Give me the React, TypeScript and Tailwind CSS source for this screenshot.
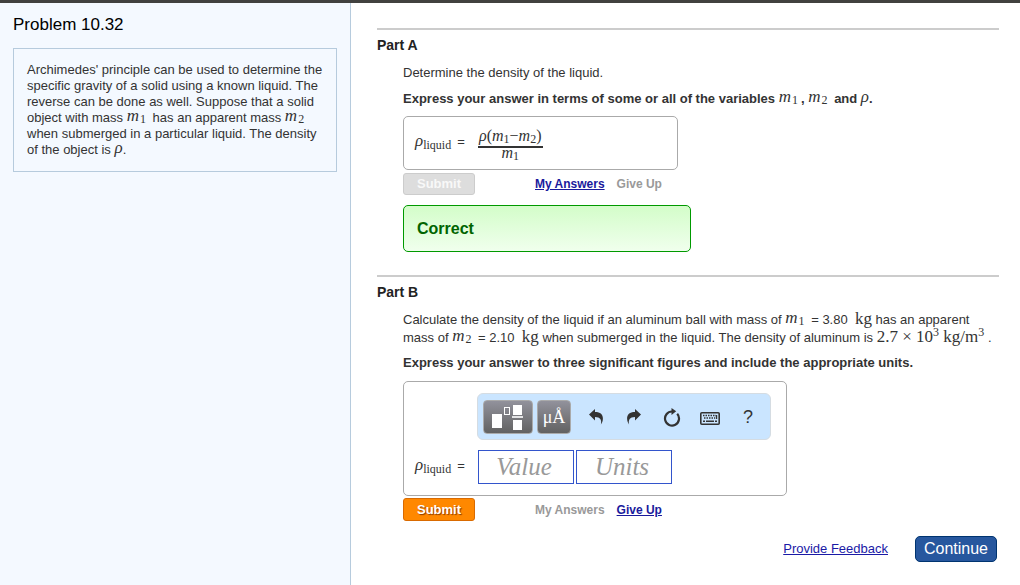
import type { ReactNode } from 'react';

function Sub({ children }: { children: ReactNode }) {
  return <span className="pl-px align-[-2px] text-[12px]">{children}</span>;
}

function MathVar({ name, sub }: { name: string; sub?: string }) {
  return (
    <span
      className={`align-[1px] font-['Liberation_Serif',serif] text-[17px] leading-[0] font-normal ${sub ? 'mr-[3px]' : ''}`}
    >
      <i>{name}</i>
      {sub && <Sub>{sub}</Sub>}
    </span>
  );
}

function Unit({ children }: { children: ReactNode }) {
  return <span className="font-['Liberation_Serif',serif] text-[17px] leading-[0]">{children}</span>;
}

function RhoLiquid() {
  return (
    <span className="w-[63px] shrink-0 pb-1 whitespace-nowrap font-['Liberation_Serif',serif] text-[17px] leading-5">
      <i>ρ</i>
      <span className="align-[-3px] text-[12px] leading-[0]">liquid</span>
      <span className="pl-1.5 font-['Liberation_Sans',sans-serif] text-[13px]">=</span>
    </span>
  );
}

function TemplatesIcon() {
  return (
    <svg width="34" height="26" viewBox="0 0 34 26" aria-hidden="true">
      <rect x="1" y="10" width="10" height="14" fill="#fff" />
      <rect x="13.5" y="3.5" width="5" height="7" fill="none" stroke="#fff" />
      <rect x="22" y="1" width="9" height="10" fill="#fff" />
      <rect x="21" y="12" width="11" height="2" fill="#fff" opacity="0.8" />
      <rect x="22" y="16" width="9" height="10" fill="#fff" />
    </svg>
  );
}

function UndoIcon({ flip = false }: { flip?: boolean }) {
  return (
    <svg width="16" height="18" viewBox="0 0 16 18" fill="#333" aria-hidden="true" className={flip ? '-scale-x-100' : ''}>
      <path d="M1 6.5 7 1v3c5.500 0 8 2.500 7.900 6.800-.1 2.400-.9 4.200-2 5.700 1-4.500-.5-7.500-5.900-7.500v3.500Z" />
    </svg>
  );
}

function ResetIcon() {
  return (
    <svg width="18" height="20" viewBox="0 0 18 20" fill="none" aria-hidden="true">
      <path d="M9 4.500A7 7 0 1 0 14.200 6.800" stroke="#333" strokeWidth="2.200" />
      <path d="M8.500 1 13.200 4.300 8.500 8Z" fill="#333" />
    </svg>
  );
}

function KeyboardIcon() {
  return (
    <svg width="20" height="13" viewBox="0 0 20 13" fill="none" stroke="#333" aria-hidden="true" className="mt-1">
      <rect x="0.8" y="0.8" width="18.4" height="11.4" rx="1" strokeWidth="1.600" />
      <path d="M3 3.500h13M4 6h11" strokeWidth="1.400" strokeDasharray="1.500 1" />
      <path d="M3 9.200h2M6 9.200h8M15 9.200h2M16.500 3v4" strokeWidth="1.400" />
    </svg>
  );
}

function ActionLink({ children, disabled = false }: { children: ReactNode; disabled?: boolean }) {
  if (disabled) {
    return <span className="text-[#999]">{children}</span>;
  }
  return (
    <a href="#" className="text-[#1a1a9c] underline">
      {children}
    </a>
  );
}

function Part({ title, children }: { title: string; children: ReactNode }) {
  return (
    <section className="border-t-2 border-[#ccc] pt-[7px]">
      <h2 className="text-[14px] leading-4 font-bold text-[#222]">{title}</h2>
      <div className="pl-[26px]">{children}</div>
    </section>
  );
}

const toolButton =
  'flex h-[34px] items-center justify-center rounded-[4px] border border-[#aaa] bg-linear-to-b from-[#92929c] to-[#626262] text-white';
const iconButton = 'flex h-8 w-[38px] items-center justify-center';
const valueInput =
  "h-[34px] w-24 border border-[#3355cc] bg-white pr-1 text-center font-['Liberation_Serif',serif] text-[25px] italic placeholder:text-[#999]";

export default function App() {
  return (
    <div className="flex min-h-screen flex-col border-t-[3px] border-[#41413f] bg-white font-['Liberation_Sans',Arial,sans-serif] text-[13px] leading-4 text-[#333]">
      <div className="flex flex-1">
        <aside className="w-[351px] shrink-0 border-r border-[#b6cbdd] bg-[#f4f9ff] px-[13px] pt-3">
          <h1 className="text-[17px] leading-5 text-black">Problem 10.32</h1>
          <div className="mt-[13px] border border-[#b6cbdd] p-[13px]">
            <p>
              Archimedes' principle can be used to determine the specific gravity of a solid using a known liquid. The
              reverse can be done as well. Suppose that a solid object with mass <MathVar name="m" sub="1" /> has an
              apparent mass <MathVar name="m" sub="2" /> when submerged in a particular liquid. The density of the
              object is <MathVar name="ρ" />.
            </p>
          </div>
        </aside>

        <main className="min-w-0 flex-1 pt-[25px] pr-[21px] pl-[26px]">
          <Part title="Part A">
            <p className="mt-3">Determine the density of the liquid.</p>
            <p className="mt-[10px] font-bold">
              Express your answer in terms of some or all of the variables <MathVar name="m" sub="1" />,{' '}
              <MathVar name="m" sub="2" /> and <MathVar name="ρ" />.
            </p>
            <div className="mt-[9px] flex h-[54px] w-[275px] items-center rounded-[5px] border border-[#aaa] pl-[11px]">
              <RhoLiquid />
              <span className="flex flex-col items-center font-['Liberation_Serif',serif] text-[16px] leading-4">
                <span className="border-b-2 border-[#333] px-px pb-0.5">
                  <i>ρ</i>(<i>m</i>
                  <span className="align-[-2px] text-[12px] leading-[0]">1</span>−<i>m</i>
                  <span className="align-[-2px] text-[12px] leading-[0]">2</span>)
                </span>
                <span className="leading-[10px]">
                  <i>m</i>
                  <span className="align-[-2px] text-[12px] leading-[0]">1</span>
                </span>
              </span>
            </div>
            <div className="mt-[3px] flex items-center text-[12px] font-bold">
              <button
                type="button"
                disabled
                className="h-[22px] w-[72px] rounded-[3px] border border-[#ccc] bg-[#ddd] text-[13px] text-[#f8f8f8]"
              >
                Submit
              </button>
              <div className="ml-[60px] flex gap-3">
                <ActionLink>My Answers</ActionLink>
                <ActionLink disabled>Give Up</ActionLink>
              </div>
            </div>
            <div className="mt-[10px] w-[288px] rounded-[5px] border border-[#090] bg-linear-to-b from-[#d3fdc9] to-[#f0ffed] px-[13px] py-3">
              <p className="text-[16px] leading-[21px] font-bold text-[#006400]">Correct</p>
            </div>
          </Part>

          <div className="mt-[23px]">
            <Part title="Part B">
              <p className="mt-[11px] leading-[18px]">
                Calculate the density of the liquid if an aluminum ball with mass of <MathVar name="m" sub="1" /> ={' '}
                3.80&nbsp; <Unit>kg</Unit> has an apparent mass of <MathVar name="m" sub="2" /> = 2.10&nbsp;{' '}
                <Unit>kg</Unit> when submerged in the liquid. The density of aluminum is{' '}
                <span className="whitespace-nowrap">
                  <Unit>
                    2.7 × 10<sup className="text-[12px]">3</sup> kg/m
                    <sup className="text-[12px]">3</sup>
                  </Unit>{' '}
                  .
                </span>
              </p>
              <p className="mt-2 font-bold">
                Express your answer to three significant figures and include the appropriate units.
              </p>
              <div className="mt-[10px] flex h-[115px] w-[384px] flex-col rounded-[5px] border border-[#aaa] pt-[11px] pr-[15px] pl-[11px]">
                <div className="ml-[62px] flex h-[47px] items-center rounded-[6px] border border-[#d5dce2] bg-[#cae5ff] pl-[5px]">
                  <button type="button" aria-label="Templates" className={`${toolButton} w-[50px]`}>
                    <TemplatesIcon />
                  </button>
                  <button
                    type="button"
                    className={`${toolButton} ml-1 w-[34px] font-['Liberation_Serif',serif] text-[18px]`}
                  >
                    μÅ
                  </button>
                  <div className="ml-1.5 flex">
                    <button type="button" aria-label="Undo" className={iconButton}>
                      <UndoIcon />
                    </button>
                    <button type="button" aria-label="Redo" className={iconButton}>
                      <UndoIcon flip />
                    </button>
                    <button type="button" aria-label="Reset" className={iconButton}>
                      <ResetIcon />
                    </button>
                    <button type="button" aria-label="Keyboard shortcuts" className={iconButton}>
                      <KeyboardIcon />
                    </button>
                    <button type="button" aria-label="Help" className={`${iconButton} text-[18px]`}>
                      ?
                    </button>
                  </div>
                </div>
                <div className="mt-[10px] flex items-center">
                  <RhoLiquid />
                  <div className="flex gap-0.5">
                    <input type="text" aria-label="Value" placeholder="Value" className={valueInput} />
                    <input type="text" aria-label="Units" placeholder="Units" className={valueInput} />
                  </div>
                </div>
              </div>
              <div className="mt-0.5 flex items-center text-[12px] font-bold">
                <button
                  type="button"
                  className="h-[23px] w-[72px] rounded-[3px] border border-[#d96a00] bg-[#ff8800] text-[13px] text-white text-shadow-[1px_1px_1px_#8a3c00]"
                >
                  Submit
                </button>
                <div className="ml-[60px] flex gap-3">
                  <ActionLink disabled>My Answers</ActionLink>
                  <ActionLink>Give Up</ActionLink>
                </div>
              </div>
            </Part>
          </div>

          <footer className="mt-[15px] flex items-center justify-end gap-[27px] pr-0.5">
            <a href="#" className="text-[#1a1aa6] underline">
              Provide Feedback
            </a>
            <button
              type="button"
              className="h-[26px] w-[82px] rounded-[5px] border border-[#003470] bg-[#27579e] text-[16px] text-white"
            >
              Continue
            </button>
          </footer>
        </main>
      </div>
    </div>
  );
}
